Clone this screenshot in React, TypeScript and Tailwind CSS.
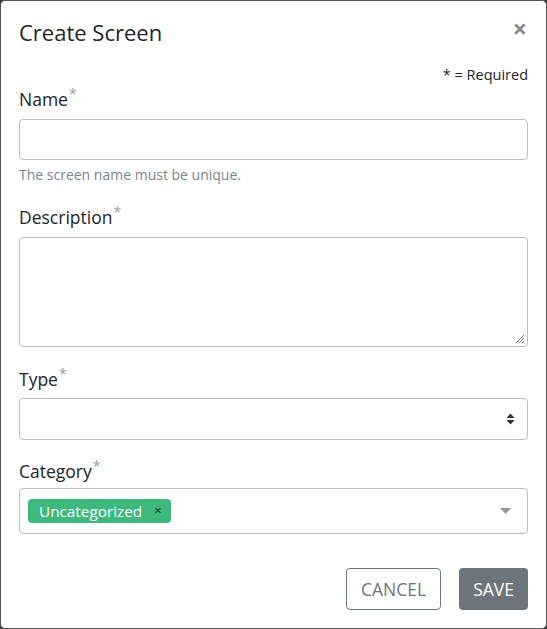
const font = { fontFamily: '"Open Sans", "Liberation Sans", sans-serif' };

function Label({ text }: { text: string }) {
  return (
    <div className="flex items-start text-[17.5px] leading-[24px] text-[#212529]">
      <span>{text}</span>
      <span className="ml-[1px] text-[14px] leading-[14px] text-[#9aa0a6]">*</span>
    </div>
  );
}

export default function App() {
  return (
    <div className="h-[629px] w-[547px] bg-[#3b3b3b]" style={font}>
      <div className="flex h-full flex-col rounded-[5px] border border-[#555] bg-white px-[18px]">
        {/* Header */}
        <div className="flex items-start justify-between pt-[16px]">
          <h1 className="text-[22px] leading-[30px] text-[#212529]">Create Screen</h1>
          <span className="mr-[1px] text-[25px] font-bold leading-[22px] text-[#8a8a8a]">×</span>
        </div>

        <div className="mt-[20px] text-right text-[14.5px] leading-[16px] text-[#212529]">* = Required</div>

        {/* Name */}
        <div className="mt-[4px]">
          <Label text="Name" />
          <div className="mt-[8px] h-[41px] rounded-[4px] border border-[#b8bec4]" />
          <p className="mt-[5px] text-[14px] leading-[20px] text-[#7b8590]">The screen name must be unique.</p>
        </div>

        {/* Description */}
        <div className="mt-[20px]">
          <Label text="Description" />
          <div className="relative mt-[8px] h-[110px] rounded-[4px] border border-[#b8bec4]">
            <svg className="absolute bottom-[2px] right-[2px]" width="12" height="12" viewBox="0 0 12 12">
              <path d="M11 3 L3 11 M11 6 L6 11 M11 9 L9 11" stroke="#777" strokeWidth="1" />
            </svg>
          </div>
        </div>

        {/* Type */}
        <div className="mt-[20px]">
          <Label text="Type" />
          <div className="mt-[7px] flex h-[42px] items-center justify-end rounded-[4px] border border-[#b8bec4] pr-[12px]">
            <svg width="9" height="12" viewBox="0 0 9 12">
              <path d="M4.5 0.5 L8.5 5 L0.5 5 Z" fill="#333" />
              <path d="M4.5 11.5 L8.5 7 L0.5 7 Z" fill="#333" />
            </svg>
          </div>
        </div>

        {/* Category */}
        <div className="mt-[19px]">
          <Label text="Category" />
          <div className="mt-[5px] flex h-[46px] items-center justify-between rounded-[4px] border border-[#b8bec4] pl-[8px] pr-[16px]">
            <span className="flex h-[24px] items-center rounded-[4px] bg-[#3db97d] pl-[11px] pr-[9px] text-[15.3px] text-white">
              Uncategorized
              <span className="ml-[12px] text-[13px] font-bold text-[#1f5a3d]">×</span>
            </span>
            <svg width="11" height="6" viewBox="0 0 11 6">
              <path d="M0 0 L11 0 L5.5 6 Z" fill="#999" />
            </svg>
          </div>
        </div>

        {/* Footer */}
        <div className="mt-[34px] flex justify-end gap-[18px]">
          <button className="h-[42px] rounded-[4px] border border-[#6c757d] px-[14px] text-[17.5px] text-[#6c757d]">
            CANCEL
          </button>
          <button className="h-[42px] rounded-[4px] bg-[#6c757d] px-[14px] text-[17.5px] text-white">SAVE</button>
        </div>
      </div>
    </div>
  );
}
